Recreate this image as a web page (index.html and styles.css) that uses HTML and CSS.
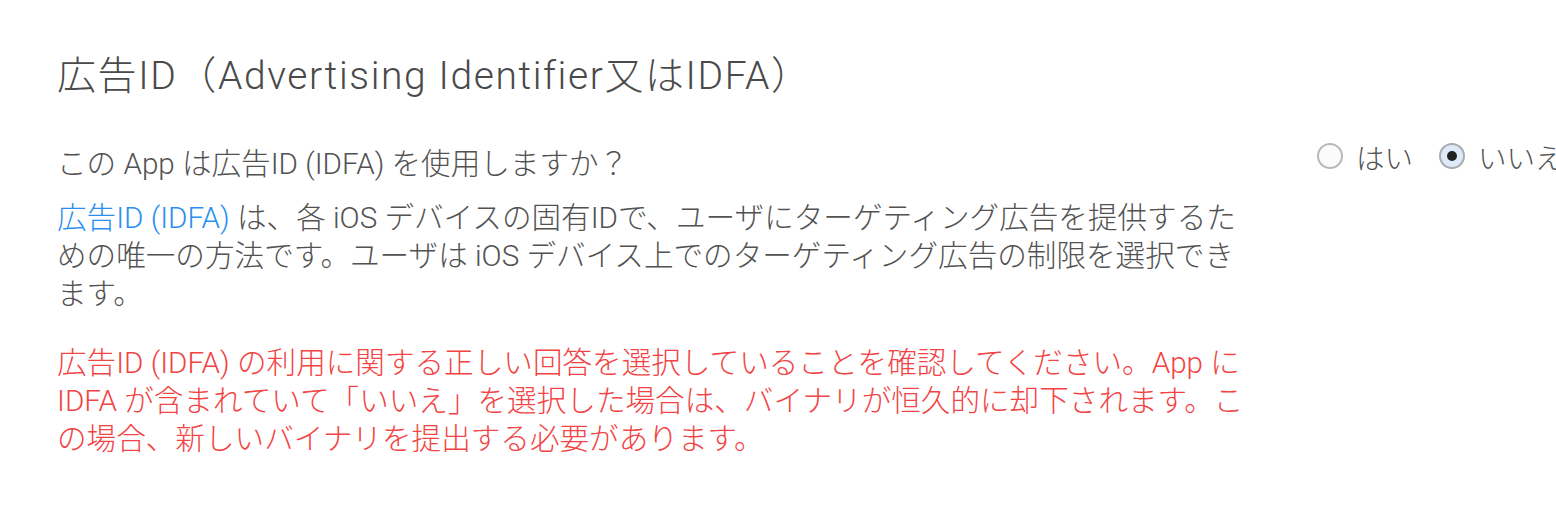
FILE: index.html
```html
<!DOCTYPE html>
<html lang="ja">
<head>
<meta charset="utf-8">
<title>広告ID</title>
<link rel="stylesheet" href="styles.css">
</head>
<body>
<main class="section">
  <h2 class="title">広告ID（Advertising Identifier又はIDFA）</h2>
  <div class="row">
    <div class="main-col">
      <p class="question">この App は広告ID (IDFA) を使用しますか？</p>
      <p class="desc"><a class="link" href="#">広告ID (IDFA)</a> は、各 iOS デバイスの固有IDで、ユーザにターゲティング広告を提供するための唯一の方法です。ユーザは iOS デバイス上でのターゲティング広告の制限を選択できます。</p>
      <p class="warning">広告ID (IDFA) の利用に関する正しい回答を選択していることを確認してください。App に IDFA が含まれていて「いいえ」を選択した場合は、バイナリが恒久的に却下されます。この場合、新しいバイナリを提出する必要があります。</p>
    </div>
    <div class="options">
      <label class="option"><span class="radio"></span><span class="option-text">はい</span></label>
      <label class="option"><span class="radio radio-checked"><span class="dot"></span></span><span class="option-text">いいえ</span></label>
    </div>
  </div>
</main>
</body>
</html>
```
FILE: styles.css
```css
html, body {
  margin: 0;
  padding: 0;
  background: #ffffff;
  overflow: hidden;
}
body {
  font-family: Roboto, "Noto Sans CJK JP", "Noto Sans", sans-serif;
  font-weight: 300;
  color: #525252;
}
.section {
  padding: 53px 0 0 57px;
  width: 1600px;
}
.title {
  margin: 0;
  font-size: 39px;
  line-height: 46px;
  font-weight: 300;
  letter-spacing: 1.6px;
  color: #4a4a4a;
}
.row {
  display: flex;
  margin-top: 46px;
}
.main-col {
  width: 1196px;
  flex: none;
}
.question {
  margin: 0;
  font-size: 29.6px;
  line-height: 38px;
}
.desc {
  margin: 16px 0 0;
  font-size: 29.6px;
  line-height: 38px;
}
.link {
  color: #2a8ff0;
  text-decoration: none;
}
.warning {
  margin: 31px 0 0;
  font-size: 29.6px;
  line-height: 38px;
  color: #f24444;
}
.options {
  display: flex;
  gap: 26px;
  margin-left: 64px;
  margin-top: -8px;
  height: 38px;
  align-items: center;
}
.option {
  display: flex;
  align-items: center;
  gap: 13px;
  font-size: 28.5px;
  color: #525252;
}
.radio {
  width: 22px;
  height: 22px;
  border: 2px solid #b9b9b9;
  border-radius: 50%;
  background: #fbfbfb;
  display: flex;
  align-items: center;
  justify-content: center;
}
.radio-checked {
  background: #dfeaf8;
  border-color: #a8acb2;
}
.dot {
  width: 10px;
  height: 10px;
  border-radius: 50%;
  background: #222222;
}
```
